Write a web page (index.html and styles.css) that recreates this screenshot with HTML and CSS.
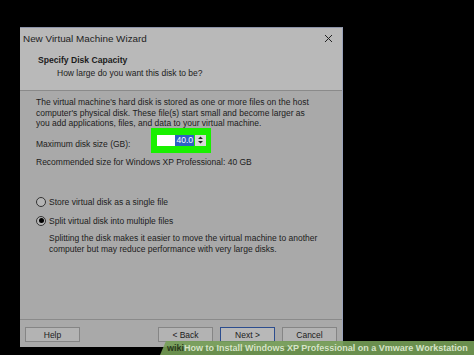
FILE: index.html
```html
<!doctype html>
<html lang="en">
<head>
  <meta charset="UTF-8">
  <meta name="viewport" content="width=device-width, initial-scale=1.0">

  <title>New Virtual Machine Wizard</title>

  <link rel="stylesheet" href="styles.css">
</head>

<body>
  <div class="dialog">
    <div class="top">
      <div class="titlebar">
        <span>New Virtual Machine Wizard</span>
        <svg class="close" width="9" height="9" viewBox="0 0 9 9">
          <path d="M1 1 L8 8 M8 1 L1 8" stroke="#222" stroke-width="1" fill="none"/>
        </svg>
      </div>

      <div class="heading">
        <h1>Specify Disk Capacity</h1>
        <p>How large do you want this disk to be?</p>
      </div>
    </div>

    <div class="content">
      <p class="intro">
        The virtual machine's hard disk is stored as one or more files on the host<br>
        computer's physical disk. These file(s) start small and become larger as<br>
        you add applications, files, and data to your virtual machine.
      </p>

      <div class="size-row">
        <label for="size">Maximum disk size (GB):</label>
        <div class="highlight">
          <div class="spin">
            <span class="spin-value"><span class="selected">40.0</span></span>
            <span class="spin-arrows">
              <svg width="9" height="10" viewBox="0 0 9 10">
                <path d="M4.5 1.5 L7 4 L2 4 Z M4.5 8.5 L7 6 L2 6 Z" fill="#222"/>
              </svg>
            </span>
          </div>
        </div>
      </div>

      <p class="recommend">Recommended size for Windows XP Professional: 40 GB</p>

      <div class="option">
        <span class="radio"></span>
        Store virtual disk as a single file
      </div>

      <div class="option option-split">
        <span class="radio checked"></span>
        Split virtual disk into multiple files
      </div>

      <p class="note">
        Splitting the disk makes it easier to move the virtual machine to another<br>
        computer but may reduce performance with very large disks.
      </p>
    </div>

    <div class="buttons">
      <button class="btn">Help</button>
      <span class="spacer"></span>
      <button class="btn">&lt; Back</button>
      <button class="btn btn-default">Next &gt;</button>
      <button class="btn">Cancel</button>
    </div>
  </div>

  <div class="banner">
    <b>wiki</b><span>How to Install Windows XP Professional on a Vmware Workstation</span>
  </div>
</body>
</html>
```

FILE: styles.css
```css
*{
  box-sizing: border-box;
}

html, body{
  margin: 0;
  width: 474px;
  height: 355px;
  overflow: hidden;
  background: #000;
}

body{
  position: relative;
  padding-top: 27px;
  color: #1c1c1c;
  font-family: "Liberation Sans", Arial, sans-serif;
  font-size: 8.5px;
}

.dialog{
  margin-left: 20px;
  width: 323px;
  height: 320px;
  display: flex;
  flex-direction: column;
  background: #a9a9a9;
  border-top: 1px solid #8c93a8;
  border-right: 1px solid #9aa2ba;
}

.top{
  height: 63px;
  background: #b9b9b9;
  border-bottom: 1px solid #8a8a8a;
}

.titlebar{
  height: 22px;
  display: flex;
  align-items: center;
  justify-content: space-between;
  padding: 0 9px 1px 3px;
  font-size: 9.9px;
  color: #222;
}

.heading{
  padding: 5px 0 0 18px;
}

.heading h1{
  margin: 0;
  font-size: 8.6px;
  line-height: 11px;
  font-weight: bold;
}

.heading p{
  margin: 2px 0 0 19px;
  line-height: 11px;
}

.content{
  flex: 1;
  padding: 6px 0 0 16px;
  white-space: nowrap;
}

.intro{
  margin: 0;
  line-height: 10.6px;
}

.size-row{
  display: flex;
  align-items: flex-start;
  margin-top: -1px;
}

.size-row label{
  width: 115px;
  padding-top: 11px;
}

.highlight{
  width: 60px;
  height: 25px;
  padding: 7px 5px 0 6px;
  background: #19f000;
}

.spin{
  display: flex;
  height: 11px;
}

.spin-value{
  width: 37px;
  background: #fff;
  text-align: right;
  line-height: 11px;
}

.selected{
  display: inline-block;
  padding: 0 1px;
  background: #2d5fc4;
  color: #fff;
}

.spin-arrows{
  width: 11px;
  margin-left: 1px;
  background: #d8d8d8;
  display: flex;
  align-items: center;
  justify-content: center;
}

.recommend{
  margin: 4px 0 0;
  line-height: 11px;
}

.option{
  display: flex;
  align-items: center;
  gap: 3px;
  height: 12px;
  margin-top: 28px;
}

.option-split{
  margin-top: 7px;
}

.radio{
  width: 10px;
  height: 10px;
  border: 1px solid #333;
  border-radius: 50%;
  background: #b4b4b4;
  display: flex;
  align-items: center;
  justify-content: center;
}

.radio.checked::after{
  content: "";
  width: 5px;
  height: 5px;
  border-radius: 50%;
  background: #000;
}

.note{
  margin: 6px 0 0 13px;
  line-height: 11px;
}

.buttons{
  display: flex;
  gap: 7px;
  height: 28px;
  padding: 7px 5px 0 5px;
  border-top: 1px solid #8a8a8a;
}

.spacer{
  flex: 1;
}

.btn{
  width: 55px;
  height: 15px;
  padding: 0;
  font-family: inherit;
  font-size: 8.5px;
  color: #1c1c1c;
  background: #b3b3b3;
  border: 1px solid #858585;
}

.btn-default{
  border-color: #2c4d8e;
  background: #b8b8b8;
}

.banner{
  position: absolute;
  left: 160px;
  right: 0;
  bottom: 0;
  height: 14px;
  padding-left: 7px;
  display: flex;
  align-items: center;
  background: rgba(118, 158, 86, 0.9);
  clip-path: polygon(6px 0, 100% 0, 100% 100%, 0 100%);
  font-size: 9px;
  font-weight: bold;
  white-space: nowrap;
}

.banner b{
  color: #2a3a1c;
}

.banner span{
  color: #d6e4c8;
}
```
